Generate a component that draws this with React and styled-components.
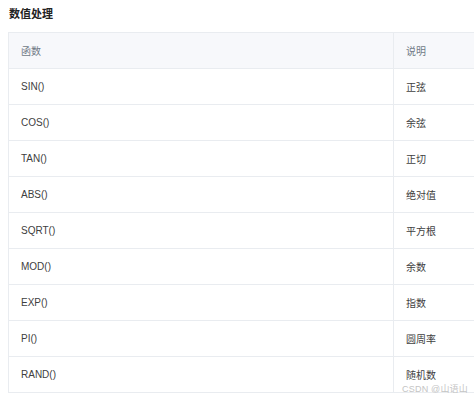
import styled, { createGlobalStyle } from "styled-components"

const GlobalStyle = createGlobalStyle`
  html, body {
    margin: 0;
    padding: 0;
    background: #ffffff;
    overflow: hidden;
  }
  body {
    font-family: "Liberation Sans", "Noto Sans CJK SC", sans-serif;
  }
`

const Page = styled.div`
  position: relative;
  width: 474px;
  height: 398px;
  padding: 7px 0 0 8px;
  box-sizing: border-box;
`

const Title = styled.h3`
  margin: 0 0 11px 1px;
  font-size: 11px;
  line-height: 14px;
  font-weight: 700;
  color: #222;
`

const Table = styled.table`
  width: 480px;
  border-collapse: collapse;
  table-layout: fixed;
  font-size: 10px;
`

const Cell = styled.td`
  height: 35px;
  padding: 0 12px;
  border: 1px solid #e9ecf0;
  color: ${(p) => (p.$head ? "#707a86" : "#404040")};
  background: ${(p) => (p.$head ? "#f7f8fb" : "#ffffff")};
  font-weight: 400;
  text-align: left;
  vertical-align: middle;
  white-space: nowrap;
`

const Watermark = styled.div`
  position: absolute;
  right: 6px;
  bottom: 3px;
  font-size: 9px;
  color: #c4c4c4;
  letter-spacing: 0.2px;
`

const rows = [
  ["SIN()", "正弦"],
  ["COS()", "余弦"],
  ["TAN()", "正切"],
  ["ABS()", "绝对值"],
  ["SQRT()", "平方根"],
  ["MOD()", "余数"],
  ["EXP()", "指数"],
  ["PI()", "圆周率"],
  ["RAND()", "随机数"],
]

const App = () => {
  return (
    <>
      <GlobalStyle />
      <Page>
        <Title>数值处理</Title>
        <Table>
          <colgroup>
            <col style={{ width: 385 }} />
            <col />
          </colgroup>
          <thead>
            <tr>
              <Cell as="th" $head>函数</Cell>
              <Cell as="th" $head>说明</Cell>
            </tr>
          </thead>
          <tbody>
            {rows.map(([fn, desc]) => (
              <tr key={fn}>
                <Cell>{fn}</Cell>
                <Cell>{desc}</Cell>
              </tr>
            ))}
          </tbody>
        </Table>
        <Watermark>CSDN @山语山</Watermark>
      </Page>
    </>
  )
}

export default App
